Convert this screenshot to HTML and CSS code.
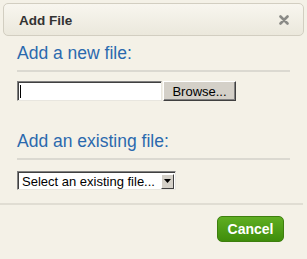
FILE: index.html
```html
<!DOCTYPE html>
<html>
<head>
    <title>Add File</title>
    <link rel="stylesheet" href="styles.css">
</head>
<body>
    <div class="dialog">
        <div class="titlebar">
            <span class="title">Add File</span>
            <svg class="close" width="10" height="10" viewBox="0 0 10 10">
                <path d="M1.5 1.5 L8.5 8.5 M8.5 1.5 L1.5 8.5" stroke="#8a8a86" stroke-width="2.6" stroke-linecap="round"/>
            </svg>
        </div>

        <div class="content">
            <h2>Add a new file:</h2>
            <div class="file-row">
                <div class="file-text"><span class="caret"></span></div>
                <button class="browse">Browse...</button>
            </div>

            <h2 class="second">Add an existing file:</h2>
            <div class="select-box">
                <select class="existing">
                    <option>Select an existing file...</option>
                </select>
                <span class="arrow">
                    <svg width="7" height="4" viewBox="0 0 7 4"><path d="M0 0 H7 L3.5 4 Z" fill="#000"/></svg>
                </span>
            </div>
        </div>

        <div class="footer">
            <button class="cancel">Cancel</button>
        </div>
    </div>
</body>
</html>
```

FILE: styles.css
```css
body {
    margin: 0;
    background: #f4f1e7;
    font-family: "Liberation Sans", Arial, sans-serif;
}

.dialog {
    width: 307px;
    height: 259px;
    padding-top: 3px;
    box-sizing: border-box;
}

.titlebar {
    margin: 0 3px;
    height: 31px;
    border: 1px solid #d2cec1;
    border-radius: 5px;
    background: linear-gradient(#f8f6ef, #ebe8dc);
    display: flex;
    align-items: center;
    justify-content: space-between;
    padding: 0 14px 0 15px;
}

.title {
    font-weight: bold;
    font-size: 13.5px;
    color: #333;
    padding-top: 1px;
}

.content {
    padding: 0 17px;
}

h2 {
    margin: 7px 0 0;
    font-size: 17.5px;
    font-weight: normal;
    line-height: 20px;
    color: #2b69ae;
    padding-bottom: 7px;
    border-bottom: 2px solid #dbd9d1;
}

h2.second {
    margin-top: 30px;
}

.file-row {
    display: flex;
    margin-top: 9px;
    gap: 1px;
}

.file-text {
    width: 145px;
    height: 20px;
    box-sizing: border-box;
    background: #fff;
    border-top: 1px solid #808080;
    border-left: 1px solid #808080;
    border-right: 1px solid #e8e6df;
    border-bottom: 1px solid #e8e6df;
    box-shadow: inset 1px 1px 0 #404040;
    padding: 3px 0 0 2px;
}

.caret {
    display: block;
    width: 1px;
    height: 13px;
    background: #000;
}

.browse {
    width: 73px;
    height: 20px;
    padding: 0;
    font-family: "Liberation Sans", Arial, sans-serif;
    font-size: 13px;
    color: #000;
    background: #d4d0c8;
    border-top: 1px solid #fff;
    border-left: 1px solid #fff;
    border-right: 1px solid #404040;
    border-bottom: 1px solid #404040;
    box-shadow: inset -1px -1px 0 #808080;
}

.select-box {
    display: flex;
    align-items: center;
    width: 159px;
    height: 19px;
    box-sizing: border-box;
    margin-top: 11px;
    background: #fff;
    border-top: 1px solid #808080;
    border-left: 1px solid #808080;
    border-right: 1px solid #e8e6df;
    border-bottom: 1px solid #e8e6df;
    box-shadow: inset 1px 1px 0 #404040;
    padding: 2px 1px 1px 2px;
}

.existing {
    appearance: none;
    -webkit-appearance: none;
    flex: 1;
    border: none;
    outline: none;
    background: transparent;
    font-family: "Liberation Sans", Arial, sans-serif;
    font-size: 13px;
    color: #000;
    padding: 0 0 0 2px;
    height: 15px;
    line-height: 15px;
}

.arrow {
    width: 13px;
    height: 15px;
    box-sizing: border-box;
    background: #d4d0c8;
    border-top: 1px solid #fff;
    border-left: 1px solid #fff;
    border-right: 1px solid #404040;
    border-bottom: 1px solid #404040;
    display: flex;
    align-items: center;
    justify-content: center;
}

.footer {
    margin-top: 13px;
    border-top: 2px solid #e0ddd3;
    margin-right: 4px;
    display: flex;
    justify-content: flex-end;
    padding: 11px 19px 0 0;
}

.cancel {
    width: 67px;
    height: 26px;
    border: 1px solid #3e7f0e;
    border-radius: 5px;
    background: linear-gradient(#5fae22, #3f8d0b);
    color: #fff;
    font-family: "Liberation Sans", Arial, sans-serif;
    font-weight: bold;
    font-size: 14px;
    padding: 0;
}
```
